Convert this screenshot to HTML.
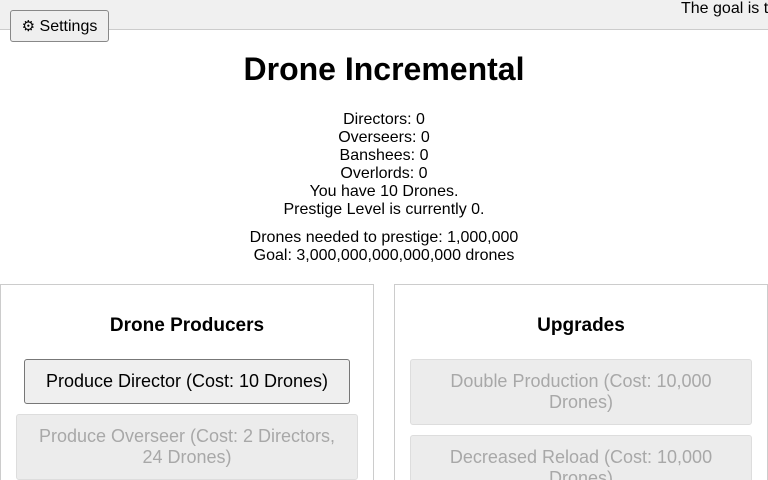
<!DOCTYPE html>
<html><head><style>
html,body{margin:0;width:768px;height:480px;overflow:hidden}
body{background:#fff;font-family:"Liberation Sans",sans-serif;color:#000;position:relative}
.bar{position:absolute;left:0;top:0;width:768px;height:29px;background:#f0f0f0;border-bottom:1px solid #ccc}
.ticker{position:absolute;left:681px;top:0;font-size:16px;white-space:nowrap;line-height:17px}
.set{position:absolute;left:10px;top:10px;width:99px;border:1px solid #888;border-radius:3px;background:#efefef;font-size:16px;line-height:30px;text-align:center;box-sizing:border-box;height:32px;padding-top:1px}
.set span{font-size:15px}
h1{position:absolute;left:0;width:768px;top:50px;margin:0;text-align:center;font-size:32px;line-height:38px}
.st{position:absolute;left:0;width:768px;text-align:center;font-size:16px;line-height:18px}
.panel{position:absolute;top:284px;height:196px;border:1px solid #ccc;border-bottom:none;box-sizing:border-box;overflow:hidden}
.panel h2{position:absolute;left:0;right:0;top:30px;margin:0;text-align:center;font-size:19px;line-height:22px}
.btn{position:absolute;box-sizing:border-box;text-align:center;font-size:18px;line-height:21px;border-radius:3px}
.on{border:1px solid #777;background:#efefef;color:#000}
.off{border:1px solid #ddd;background:#ececec;color:#a8a8a8}
</style></head><body>
<div class="bar"><div class="ticker">The goal is t</div></div>
<div class="set"><span>⚙</span> Settings</div>
<h1>Drone Incremental</h1>
<div class="st" style="top:111px">Directors: 0<br>Overseers: 0<br>Banshees: 0<br>Overlords: 0<br>You have 10 Drones.<br>Prestige Level is currently 0.</div>
<div class="st" style="top:229px">Drones needed to prestige: 1,000,000<br>Goal: 3,000,000,000,000,000 drones</div>
<div class="panel" style="left:0;width:374px"><h2>Drone Producers</h2>
<div class="btn on" style="left:23px;top:74px;width:326px;height:45px;padding-top:11px">Produce Director (Cost: 10 Drones)</div>
<div class="btn off" style="left:15px;top:129px;width:342px;height:66px;padding-top:11px">Produce Overseer (Cost: 2 Directors,<br>24 Drones)</div>
</div>
<div class="panel" style="left:394px;width:374px"><h2>Upgrades</h2>
<div class="btn off" style="left:15px;top:74px;width:342px;height:66px;padding-top:11px">Double Production (Cost: 10,000<br>Drones)</div>
<div class="btn off" style="left:15px;top:150px;width:342px;height:66px;padding-top:11px">Decreased Reload (Cost: 10,000<br>Drones)</div>
</div>
</body></html>
